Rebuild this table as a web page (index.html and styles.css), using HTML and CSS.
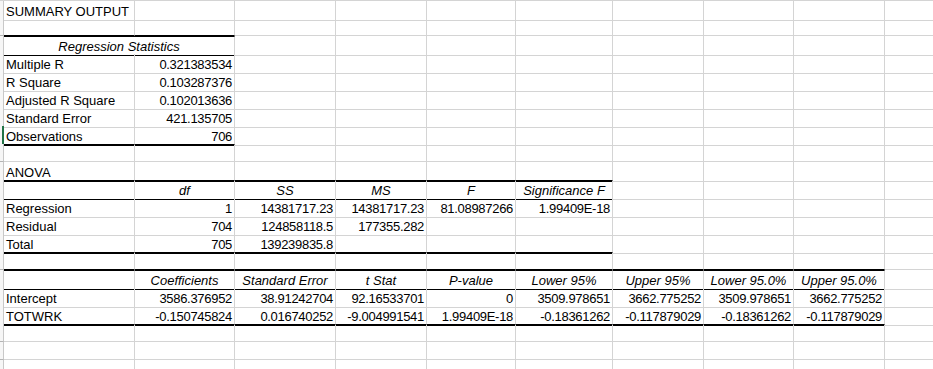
FILE: index.html
```html
<!DOCTYPE html>
<html>
<head>
<meta charset="utf-8">
<link rel="stylesheet" href="styles.css">
</head>
<body>
<div class="sheet">
  <div class="r r1"><div class="h"></div><div class="c">SUMMARY OUTPUT</div><div class="c"></div><div class="c"></div><div class="c"></div><div class="c"></div><div class="c"></div><div class="c"></div><div class="c"></div><div class="c"></div><div class="c"></div></div>
  <div class="r"><div class="h"></div><div class="c bb"></div><div class="c bb"></div><div class="c"></div><div class="c"></div><div class="c"></div><div class="c"></div><div class="c"></div><div class="c"></div><div class="c"></div><div class="c"></div></div>
  <div class="r"><div class="h"></div><div class="c m i bt bb">Regression Statistics</div><div class="c"></div><div class="c"></div><div class="c"></div><div class="c"></div><div class="c"></div><div class="c"></div><div class="c"></div><div class="c"></div></div>
  <div class="r"><div class="h"></div><div class="c">Multiple R</div><div class="c n">0.321383534</div><div class="c"></div><div class="c"></div><div class="c"></div><div class="c"></div><div class="c"></div><div class="c"></div><div class="c"></div><div class="c"></div></div>
  <div class="r"><div class="h"></div><div class="c">R Square</div><div class="c n">0.103287376</div><div class="c"></div><div class="c"></div><div class="c"></div><div class="c"></div><div class="c"></div><div class="c"></div><div class="c"></div><div class="c"></div></div>
  <div class="r"><div class="h"></div><div class="c">Adjusted R Square</div><div class="c n">0.102013636</div><div class="c"></div><div class="c"></div><div class="c"></div><div class="c"></div><div class="c"></div><div class="c"></div><div class="c"></div><div class="c"></div></div>
  <div class="r"><div class="h"></div><div class="c">Standard Error</div><div class="c n">421.135705</div><div class="c"></div><div class="c"></div><div class="c"></div><div class="c"></div><div class="c"></div><div class="c"></div><div class="c"></div><div class="c"></div></div>
  <div class="r"><div class="h sel"></div><div class="c bb">Observations</div><div class="c n bb">706</div><div class="c"></div><div class="c"></div><div class="c"></div><div class="c"></div><div class="c"></div><div class="c"></div><div class="c"></div><div class="c"></div></div>
  <div class="r"><div class="h"></div><div class="c bt"></div><div class="c bt"></div><div class="c"></div><div class="c"></div><div class="c"></div><div class="c"></div><div class="c"></div><div class="c"></div><div class="c"></div><div class="c"></div></div>
  <div class="r"><div class="h"></div><div class="c bb">ANOVA</div><div class="c bb"></div><div class="c bb"></div><div class="c bb"></div><div class="c bb"></div><div class="c bb"></div><div class="c"></div><div class="c"></div><div class="c"></div><div class="c"></div></div>
  <div class="r"><div class="h"></div><div class="c bt bb"></div><div class="c i bt bb">df</div><div class="c i bt bb">SS</div><div class="c i bt bb">MS</div><div class="c i bt bb">F</div><div class="c i bt bb">Significance F</div><div class="c"></div><div class="c"></div><div class="c"></div><div class="c"></div></div>
  <div class="r"><div class="h"></div><div class="c">Regression</div><div class="c n">1</div><div class="c n">14381717.23</div><div class="c n">14381717.23</div><div class="c n">81.08987266</div><div class="c n">1.99409E-18</div><div class="c"></div><div class="c"></div><div class="c"></div><div class="c"></div></div>
  <div class="r"><div class="h"></div><div class="c">Residual</div><div class="c n">704</div><div class="c n">124858118.5</div><div class="c n">177355.282</div><div class="c"></div><div class="c"></div><div class="c"></div><div class="c"></div><div class="c"></div><div class="c"></div></div>
  <div class="r"><div class="h"></div><div class="c bb">Total</div><div class="c n bb">705</div><div class="c n bb">139239835.8</div><div class="c bb"></div><div class="c bb"></div><div class="c bb"></div><div class="c"></div><div class="c"></div><div class="c"></div><div class="c"></div></div>
  <div class="r"><div class="h"></div><div class="c bt bb"></div><div class="c bt bb"></div><div class="c bt bb"></div><div class="c bt bb"></div><div class="c bt bb"></div><div class="c bt bb"></div><div class="c bb"></div><div class="c bb"></div><div class="c bb"></div><div class="c"></div></div>
  <div class="r"><div class="h"></div><div class="c bt bb"></div><div class="c i bt bb">Coefficients</div><div class="c i bt bb">Standard Error</div><div class="c i bt bb">t Stat</div><div class="c i bt bb">P-value</div><div class="c i bt bb">Lower 95%</div><div class="c i bt bb">Upper 95%</div><div class="c i bt bb">Lower 95.0%</div><div class="c i bt bb">Upper 95.0%</div><div class="c"></div></div>
  <div class="r"><div class="h"></div><div class="c">Intercept</div><div class="c n">3586.376952</div><div class="c n">38.91242704</div><div class="c n">92.16533701</div><div class="c n">0</div><div class="c n">3509.978651</div><div class="c n">3662.775252</div><div class="c n">3509.978651</div><div class="c n">3662.775252</div><div class="c"></div></div>
  <div class="r"><div class="h"></div><div class="c bb">TOTWRK</div><div class="c n bb">-0.150745824</div><div class="c n bb">0.016740252</div><div class="c n bb">-9.004991541</div><div class="c n bb">1.99409E-18</div><div class="c n bb">-0.18361262</div><div class="c n bb">-0.117879029</div><div class="c n bb">-0.18361262</div><div class="c n bb">-0.117879029</div><div class="c"></div></div>
  <div class="r"><div class="h"></div><div class="c bt"></div><div class="c bt"></div><div class="c bt"></div><div class="c bt"></div><div class="c bt"></div><div class="c bt"></div><div class="c bt"></div><div class="c bt"></div><div class="c bt"></div><div class="c"></div></div>
  <div class="r"><div class="h"></div><div class="c"></div><div class="c"></div><div class="c"></div><div class="c"></div><div class="c"></div><div class="c"></div><div class="c"></div><div class="c"></div><div class="c"></div><div class="c"></div></div>
  <div class="r"><div class="h"></div><div class="c"></div><div class="c"></div><div class="c"></div><div class="c"></div><div class="c"></div><div class="c"></div><div class="c"></div><div class="c"></div><div class="c"></div><div class="c"></div></div>
</div>
</body>
</html>
```

FILE: styles.css
```css
html, body {
  margin: 0;
  padding: 0;
  background: #ffffff;
  overflow: hidden;
}

.sheet {
  width: 933px;
  height: 369px;
  overflow: hidden;
  border-top: 1px solid #d4d4d4;
  font-family: "Liberation Sans", Arial, sans-serif;
  font-size: 13px;
  color: #000000;
}

.r {
  display: grid;
  grid-template-columns: 4px 131px 100px 101px 91px 89px 97px 91px 90px 91px 60px;
  height: 18px;
}

.r1 {
  height: 17px;
}

.h {
  box-sizing: border-box;
  background: #f6f6f6;
  border-right: 1px solid #c8c8c8;
  border-bottom: 1px solid #b4b4b4;
}

.h.sel {
  border-right-color: #217346;
  box-shadow: inset -1px 0 0 #217346;
}

.c {
  box-sizing: border-box;
  border-right: 1px solid #d4d4d4;
  border-bottom: 1px solid #d4d4d4;
  padding: 2px 2px 0 2px;
  line-height: 17px;
  white-space: nowrap;
  min-width: 0;
}

.n {
  text-align: right;
  letter-spacing: -0.3px;
}

.i {
  font-style: italic;
  text-align: center;
}

.m {
  grid-column: span 2;
}

.bb {
  border-bottom-color: #000000;
}

.bt {
  border-top: 1px solid #000000;
  padding-top: 1px;
}
```
